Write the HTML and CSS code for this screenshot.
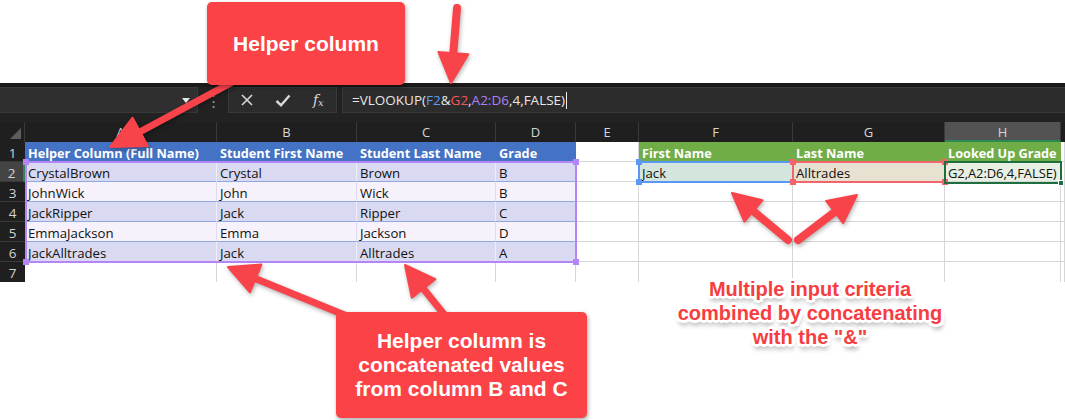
FILE: index.html
```html
<!DOCTYPE html>
<html>
<head>
<meta charset="utf-8">
<link rel="stylesheet" href="styles.css">
</head>
<body>
<div class="page">
  <div class="top"></div>
  <div class="fbar">
    <div class="namebox"><span class="dd"></span></div>
    <div class="sep">&#8942;</div>
    <div class="btns">
      <div class="btn b1"><svg width="12" height="12" viewBox="0 0 12 12"><path d="M1 1 L11 11 M11 1 L1 11" stroke="#d8d8d8" stroke-width="1.6" fill="none"/></svg></div>
      <div class="btn b2"><svg width="16" height="13" viewBox="0 0 16 13"><path d="M1.5 7 L6 11.2 L14.5 1.5" stroke="#d8d8d8" stroke-width="2.4" fill="none"/></svg></div>
      <div class="btn b3"><span class="fx">f<span class="fxs">x</span></span></div>
    </div>
    <div class="formula">=VLOOKUP(<span class="rb">F2</span>&amp;<span class="rr">G2</span>,<span class="rp">A2:D6</span>,4,FALSE)<span class="caret"></span></div>
  </div>
  <div class="grid">
    <div class="ch corner"><span class="tri"></span></div>
    <div class="ch">A</div><div class="ch">B</div><div class="ch">C</div><div class="ch">D</div><div class="ch">E</div><div class="ch">F</div><div class="ch">G</div><div class="ch sel">H</div><div class="ch end"></div>

    <div class="rh">1</div>
    <div class="c th">Helper Column (Full Name)</div><div class="c th">Student First Name</div><div class="c th">Student Last Name</div><div class="c th">Grade</div>
    <div class="c"></div>
    <div class="c gh">First Name</div><div class="c gh">Last Name</div><div class="c gh">Looked Up Grade</div><div class="c"></div>

    <div class="rh sel">2</div>
    <div class="c bd">CrystalBrown</div><div class="c bd">Crystal</div><div class="c bd">Brown</div><div class="c bd">B</div>
    <div class="c"></div>
    <div class="c f2">Jack</div><div class="c g2">Alltrades</div><div class="c h2">G2,A2:D6,4,FALSE)</div><div class="c"></div>

    <div class="rh">3</div>
    <div class="c bl">JohnWick</div><div class="c bl">John</div><div class="c bl">Wick</div><div class="c bl">B</div>
    <div class="c"></div><div class="c"></div><div class="c"></div><div class="c"></div><div class="c"></div>

    <div class="rh">4</div>
    <div class="c bd">JackRipper</div><div class="c bd">Jack</div><div class="c bd">Ripper</div><div class="c bd">C</div>
    <div class="c"></div><div class="c"></div><div class="c"></div><div class="c"></div><div class="c"></div>

    <div class="rh">5</div>
    <div class="c bl">EmmaJackson</div><div class="c bl">Emma</div><div class="c bl">Jackson</div><div class="c bl">D</div>
    <div class="c"></div><div class="c"></div><div class="c"></div><div class="c"></div><div class="c"></div>

    <div class="rh">6</div>
    <div class="c bd">JackAlltrades</div><div class="c bd">Jack</div><div class="c bd">Alltrades</div><div class="c bd">A</div>
    <div class="c"></div><div class="c"></div><div class="c"></div><div class="c"></div><div class="c"></div>

    <div class="rh last">7</div>
    <div class="c nb"></div><div class="c nb"></div><div class="c nb"></div><div class="c nb"></div><div class="c nb"></div><div class="c nb"></div><div class="c nb"></div><div class="c nb"></div><div class="c nb"></div>
  </div>

  <div class="ref purple">
    <span class="hd tl"></span><span class="hd tr"></span><span class="hd bl2"></span><span class="hd br"></span>
  </div>
  <div class="ref blue">
    <span class="hd tl"></span><span class="hd tr"></span><span class="hd bl2"></span><span class="hd br"></span>
  </div>
  <div class="ref red">
    <span class="hd tl"></span><span class="hd tr"></span><span class="hd bl2"></span><span class="hd br"></span>
  </div>
  <div class="ref green"><span class="fill"></span></div>

  <svg class="arrows" width="1065" height="420" viewBox="0 0 1065 420">
    <g fill="#f9434a" stroke="#f9434a" stroke-linecap="round" stroke-linejoin="round">
      <line x1="240" y1="78" x2="136" y2="134" stroke-width="7"/>
      <polygon points="110,147 147.8,145.9 132.6,117.7" stroke-width="2"/>
      <line x1="457" y1="8" x2="453" y2="57" stroke-width="8"/>
      <polygon points="451,83 468.4,54.3 438.4,51.9" stroke-width="2"/>
      <line x1="347" y1="316" x2="254" y2="278" stroke-width="7"/>
      <polygon points="228,267 261.4,264.5 250,292.3" stroke-width="2"/>
      <line x1="447" y1="318" x2="422" y2="287" stroke-width="7"/>
      <polygon points="405,265 435.4,279.2 411.8,297.8" stroke-width="2"/>
      <line x1="788" y1="240" x2="752" y2="210" stroke-width="8"/>
      <polygon points="732,193 762.4,200.3 744.4,221.7" stroke-width="2"/>
      <line x1="798" y1="240" x2="836" y2="211" stroke-width="8"/>
      <polygon points="857,195 843.2,223.1 826.2,200.9" stroke-width="2"/>
    </g>
  </svg>

  <div class="callout c-top">Helper column</div>
  <div class="callout c-bottom">Helper column is<br>concatenated values<br>from column B and C</div>
  <div class="note">Multiple input criteria<br>combined by concatenating<br>with the "&amp;"</div>
</div>
</body>
</html>
```

FILE: styles.css
```css
* { box-sizing: border-box; }
html, body { margin: 0; padding: 0; background: #ffffff; }
.page {
  position: relative;
  width: 1065px;
  height: 420px;
  overflow: hidden;
  background: #ffffff;
  font-family: "Open Sans", "Noto Sans", sans-serif;
}
.top { height: 83px; }

/* formula bar */
.fbar {
  height: 39px;
  background: #222222;
  border-top: 4px solid #1a1a1a;
  display: flex;
  align-items: flex-start;
}
.namebox {
  width: 198px;
  height: 26px;
  background: #2f2f2f;
  border: 1px solid #393939;
  border-left: none;
  position: relative;
}
.dd {
  position: absolute;
  right: 7px;
  top: 10px;
  width: 0; height: 0;
  border-left: 4px solid transparent;
  border-right: 4px solid transparent;
  border-top: 5px solid #e6e6e6;
}
.sep {
  width: 30px;
  height: 26px;
  color: #9c9c9c;
  font-size: 15px;
  line-height: 26px;
  text-align: center;
}
.btns {
  width: 109px;
  height: 26px;
  background: #2c2c2c;
  border: 1px solid #393939;
  display: flex;
}
.btn { height: 24px; display: flex; align-items: center; justify-content: center; }
.b1 { width: 36px; }
.b2 { width: 37px; }
.b3 { width: 36px; }
.fx {
  font-family: "DejaVu Serif", "Liberation Serif", serif;
  font-style: italic;
  color: #d8d8d8;
  font-size: 14px;
  line-height: 1;
}
.fxs { font-size: 10px; position: relative; top: 1px; }
.formula {
  flex: 1;
  margin-left: 5px;
  height: 26px;
  background: #2c2c2c;
  border: 1px solid #393939;
  border-right: none;
  padding-left: 9px;
  color: #e8e8e8;
  font-size: 13.5px;
  line-height: 24px;
  white-space: nowrap;
}
.rb { color: #5b9cf9; }
.rr { color: #f3575e; }
.rp { color: #ab80f7; }
.caret {
  display: inline-block;
  width: 1px;
  height: 17px;
  background: #f0f0f0;
  vertical-align: -4px;
  margin-left: 1px;
}

/* grid */
.grid {
  display: grid;
  grid-template-columns: 25px 192px 140px 139px 80px 63px 154px 152px 116px 4px;
  grid-auto-rows: 20px;
}
.ch {
  background: #1f1f1f;
  border-right: 1px solid #3a3a3a;
  color: #d6d6d6;
  font-size: 13px;
  line-height: 21px;
  text-align: center;
}
.ch.end { border-right: none; }
.ch.sel {
  background: #535353;
  border-bottom: 2px solid #2a8a52;
  line-height: 20px;
}
.corner { position: relative; }
.tri {
  position: absolute;
  right: 3px;
  bottom: 3px;
  width: 0; height: 0;
  border-left: 11px solid transparent;
  border-bottom: 11px solid #5e5e5e;
}
.rh {
  background: #1f1f1f;
  border-bottom: 1px solid #3a3a3a;
  color: #d4d4d4;
  font-size: 13.5px;
  line-height: 17px;
  padding-top: 3px;
  text-align: center;
}
.rh.sel { background: #444444; border-right: 2px solid #2a8a52; }
.rh.last { border-bottom: none; }
.c {
  background: #ffffff;
  border-right: 1px solid #d6d6d6;
  border-bottom: 1px solid #d6d6d6;
  color: #111111;
  font-size: 13.2px;
  line-height: 17px;
  padding-top: 3px;
  padding-left: 3px;
  white-space: nowrap;
  overflow: hidden;
}
.c.nb { border-bottom: none; }
.th {
  background: #4472c4;
  border-right-color: #4472c4;
  border-bottom-color: #4472c4;
  color: #ffffff;
  font-weight: 700;
  font-size: 12.7px;
}
.gh {
  background: #70ad47;
  border-right-color: #70ad47;
  border-bottom-color: #70ad47;
  color: #ffffff;
  font-weight: 700;
  font-size: 12.7px;
}
.bd { background: #d9daf2; border-right-color: #eeeef9; border-bottom-color: #8ea9db; }
.bl { background: #f6f1fa; border-right-color: #dcdcee; border-bottom-color: #8ea9db; }
.f2 { background: #d4e5de; }
.g2 { background: #e7e1d2; }
.h2 { background: #e8efe3; padding-left: 3px; font-size: 13px; letter-spacing: -0.1px; }

/* reference borders (overlays) */
.ref { position: absolute; border: 2px solid; }
.purple { left: 25px; top: 161px; width: 552px; height: 102px; border-color: #b385f7; }
.blue { left: 638px; top: 161px; width: 156px; height: 22px; border-color: #5b97f5; }
.red { left: 792px; top: 161px; width: 154px; height: 22px; border-color: #f2646c; }
.green { left: 944px; top: 161px; width: 118px; height: 23px; border-color: #1f6e3f; }
.hd { position: absolute; width: 6px; height: 6px; }
.purple .hd { background: #b385f7; }
.blue .hd { background: #5b97f5; }
.red .hd { background: #f2646c; }
.hd.tl { left: -4px; top: -4px; }
.hd.tr { right: -4px; top: -4px; }
.hd.bl2 { left: -4px; bottom: -4px; }
.hd.br { right: -4px; bottom: -4px; }
.fill {
  position: absolute;
  right: -4px;
  bottom: -4px;
  width: 6px;
  height: 6px;
  background: #1f6e3f;
  border: 1px solid #ffffff;
}

/* annotations */
.arrows {
  position: absolute;
  left: 0;
  top: 0;
  filter: drop-shadow(1px 2px 2px rgba(0, 0, 0, 0.3));
}
.callout {
  position: absolute;
  background: #fb4246;
  border-radius: 5px;
  color: #ffffff;
  font-family: "Liberation Sans", Arial, sans-serif;
  font-weight: 700;
  font-size: 21px;
  line-height: 24px;
  text-align: center;
  display: flex;
  align-items: center;
  justify-content: center;
  box-shadow: 1px 2px 4px rgba(0, 0, 0, 0.35);
}
.c-top { left: 207px; top: 2px; width: 198px; height: 83px; }
.c-bottom { left: 336px; top: 312px; width: 251px; height: 106px; }
.note {
  position: absolute;
  left: 610px;
  top: 277px;
  width: 400px;
  text-align: center;
  font-family: "Liberation Sans", Arial, sans-serif;
  font-weight: 700;
  font-size: 20px;
  line-height: 24px;
  color: #f63d40;
  text-shadow:
    2px 0 0 #fff, -2px 0 0 #fff, 0 2px 0 #fff, 0 -2px 0 #fff,
    2px 2px 0 #fff, -2px 2px 0 #fff, 2px -2px 0 #fff, -2px -2px 0 #fff,
    3px 0 0 #fff, -3px 0 0 #fff, 0 3px 0 #fff, 0 -3px 0 #fff,
    3px 2px 0 #fff, -3px 2px 0 #fff,
    1px 5px 5px rgba(0, 0, 0, 0.45);
}
```
